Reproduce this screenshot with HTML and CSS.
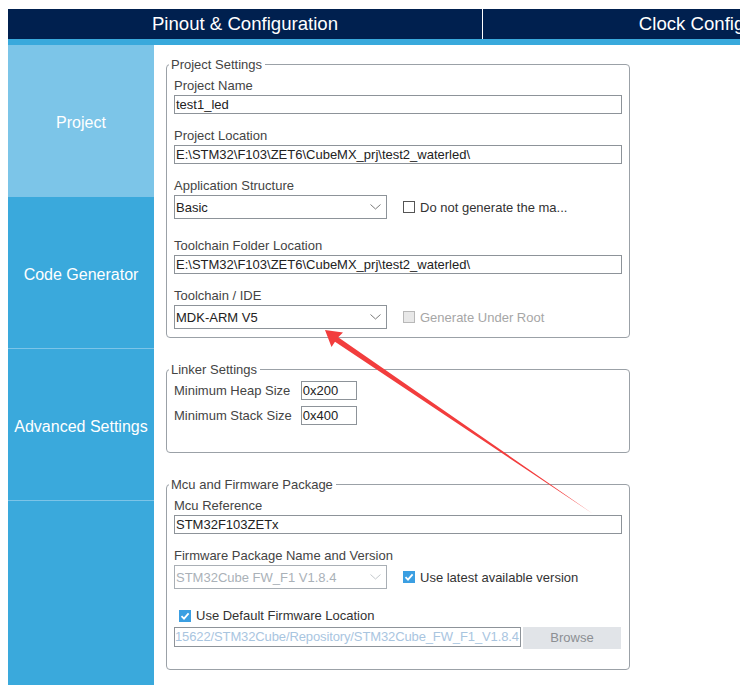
FILE: index.html
```html
<!DOCTYPE html>
<html>
<head>
<meta charset="utf-8">
<link rel="stylesheet" href="styles.css">
</head>
<body>
<div class="app">
  <div class="tabs">
    <div class="tab">Pinout &amp; Configuration</div>
    <div class="tab">Clock Configuration</div>
  </div>
  <div class="strip"></div>
  <div class="main">
    <nav class="sidebar">
      <div class="nav-item active">Project</div>
      <div class="nav-item">Code Generator</div>
      <div class="nav-item">Advanced Settings</div>
    </nav>
    <section class="content">
      <fieldset class="group g-project">
        <legend>Project Settings</legend>
        <div class="label">Project Name</div>
        <div class="input">test1_led</div>
        <div class="label">Project Location</div>
        <div class="input">E:\STM32\F103\ZET6\CubeMX_prj\test2_waterled\</div>
        <div class="label">Application Structure</div>
        <div class="row sel-row">
          <div class="select"><span>Basic</span><svg class="chev" width="11" height="6" viewBox="0 0 11 6"><polyline points="0.5,0.5 5.5,5 10.5,0.5" fill="none" stroke="#7a7a7a" stroke-width="1"/></svg></div>
          <div class="check"><span class="box"></span><span>Do not generate the ma...</span></div>
        </div>
        <div class="label">Toolchain Folder Location</div>
        <div class="input">E:\STM32\F103\ZET6\CubeMX_prj\test2_waterled\</div>
        <div class="label">Toolchain / IDE</div>
        <div class="row sel-row last">
          <div class="select"><span>MDK-ARM V5</span><svg class="chev" width="11" height="6" viewBox="0 0 11 6"><polyline points="0.5,0.5 5.5,5 10.5,0.5" fill="none" stroke="#7a7a7a" stroke-width="1"/></svg></div>
          <div class="check disabled"><span class="box"></span><span>Generate Under Root</span></div>
        </div>
      </fieldset>

      <fieldset class="group g-linker">
        <legend>Linker Settings</legend>
        <div class="linker-grid">
          <div class="glabel">Minimum Heap Size</div>
          <div class="input small">0x200</div>
          <div class="glabel">Minimum Stack Size</div>
          <div class="input small">0x400</div>
        </div>
      </fieldset>

      <fieldset class="group g-mcu">
        <legend>Mcu and Firmware Package</legend>
        <div class="label">Mcu Reference</div>
        <div class="input">STM32F103ZETx</div>
        <div class="label">Firmware Package Name and Version</div>
        <div class="row sel-row fw">
          <div class="select disabled"><span>STM32Cube FW_F1 V1.8.4</span><svg class="chev" width="11" height="6" viewBox="0 0 11 6"><polyline points="0.5,0.5 5.5,5 10.5,0.5" fill="none" stroke="#c4c8cc" stroke-width="1"/></svg></div>
          <div class="check on"><span class="box"><svg width="12" height="12" viewBox="0 0 12 12"><polyline points="2.5,6.2 5,8.6 9.6,3.4" fill="none" stroke="#fff" stroke-width="1.8"/></svg></span><span>Use latest available version</span></div>
        </div>
        <div class="check on default-loc"><span class="box"><svg width="12" height="12" viewBox="0 0 12 12"><polyline points="2.5,6.2 5,8.6 9.6,3.4" fill="none" stroke="#fff" stroke-width="1.8"/></svg></span><span>Use Default Firmware Location</span></div>
        <div class="row path-row">
          <div class="input path"><span>15622/STM32Cube/Repository/STM32Cube_FW_F1_V1.8.4</span></div>
          <div class="button">Browse</div>
        </div>
      </fieldset>
    </section>
  </div>
  <svg class="annot" width="740" height="685" viewBox="0 0 740 685">
    <polygon points="325,330 343,332.5 338.2,337.2 592.5,513.5 335,341.8 331.5,347" fill="#f23d3d"/>
  </svg>
</div>
</body>
</html>
```
FILE: styles.css
```css
* { box-sizing: border-box; }
html, body { margin: 0; padding: 0; background: #fff; }
body {
  font-family: "Liberation Sans", Arial, sans-serif;
  font-size: 13px;
  color: #3c3c3c;
  width: 740px;
  height: 685px;
  overflow: hidden;
}
.app {
  position: relative;
  width: 740px;
  height: 685px;
  padding: 9px 0 0 8px;
}
.tabs {
  display: flex;
  height: 30px;
  background: #00204f;
  overflow: hidden;
  width: 732px;
}
.tab {
  flex: 0 0 475px;
  border-right: 1px solid #fff;
  color: #fff;
  font-size: 18.6px;
  line-height: 30px;
  text-align: center;
  white-space: nowrap;
}
.strip {
  height: 6px;
  width: 732px;
  background: #39a9dc;
}
.main {
  display: flex;
  height: 640px;
}
.sidebar {
  width: 146px;
  flex: 0 0 146px;
  background: #3aa9dc;
  display: flex;
  flex-direction: column;
}
.nav-item {
  height: 152px;
  border-bottom: 1px solid #7cc4e8;
  color: #fff;
  font-size: 16px;
  display: flex;
  align-items: center;
  justify-content: center;
  padding-top: 4px;
}
.nav-item.active {
  background: #7cc5e8;
}
.content {
  padding: 12px 0 0 12px;
}
.group {
  width: 464px;
  border: 1px solid #9ba1a7;
  border-radius: 4px;
  margin: 0 0 24px 0;
  padding: 6px 7px 8px 7px;
  min-width: 0;
}
.group legend {
  font-size: 13px;
  line-height: 15px;
  padding: 0 3px 0 2px;
  margin-left: -5px;
  color: #444;
}
.label {
  line-height: 15px;
  margin-bottom: 2px;
  color: #444;
}
.input {
  height: 19px;
  border: 1px solid #8d9399;
  line-height: 17px;
  padding: 0 1px;
  color: #222;
  white-space: nowrap;
  overflow: hidden;
  margin-bottom: 14px;
}
.row {
  display: flex;
  align-items: center;
}
.sel-row {
  margin-bottom: 19px;
}
.sel-row.last { margin-bottom: 0; }
.select {
  width: 213px;
  height: 24px;
  border: 1px solid #8d9399;
  display: flex;
  align-items: center;
  justify-content: space-between;
  padding: 0 5px 0 1px;
  color: #222;
  white-space: nowrap;
}
.select.disabled {
  color: #aab1b8;
  border-color: #a9afb5;
}
.chev { display: block; }
.check {
  display: flex;
  align-items: center;
  gap: 5px;
  margin-left: 16px;
  color: #333;
  white-space: nowrap;
}
.check .box {
  width: 12px;
  height: 12px;
  border: 1px solid #555;
  background: #fff;
  display: block;
  flex: 0 0 12px;
}
.check.disabled { color: #a6a6a6; }
.check.disabled .box {
  background: #e8e8e8;
  border-color: #b8b8b8;
}
.check.on .box {
  border: none;
  background: #3b9fe2;
}
.check.on .box svg { display: block; }
.g-linker {
  padding: 4px 7px 27px 7px;
  margin-bottom: 24px;
}
.linker-grid {
  display: grid;
  grid-template-columns: auto 56px;
  justify-content: start;
  column-gap: 9px;
  row-gap: 6px;
  align-items: center;
}
.glabel {
  color: #444;
  line-height: 15px;
}
.input.small {
  margin-bottom: 0;
}
.input:last-child { margin-bottom: 0; }
.g-mcu {
  padding-bottom: 20px;
}
.sel-row.fw {
  margin-bottom: 19px;
}
.default-loc {
  margin-left: 5px;
  line-height: 15px;
  margin-bottom: 4px;
}
.path-row {
  gap: 2px;
  align-items: flex-start;
  width: 447px;
}
.input.path {
  flex: 1;
  height: 20px;
  margin-bottom: 0;
  color: #a9c5df;
  line-height: 18px;
  letter-spacing: -0.12px;
  padding: 0;
}
.button {
  flex: 0 0 98px;
  height: 22px;
  background: #e1e4e8;
  color: #8c8f93;
  text-align: center;
  line-height: 22px;
}
.annot {
  position: absolute;
  left: 0;
  top: 0;
  pointer-events: none;
}
```
